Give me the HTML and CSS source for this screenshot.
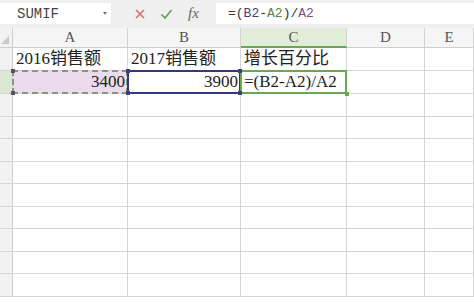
FILE: index.html
```html
<!DOCTYPE html>
<html>
<head>
<meta charset="utf-8">
<link rel="stylesheet" href="styles.css">
</head>
<body>
<div class="app">
  <div class="toolbar">
    <div class="namebox"><span class="name">SUMIF</span><span class="caret"></span></div>
    <div class="tools">
      <svg class="ico" width="12" height="12" viewBox="0 0 12 12"><path d="M2 2 L10 10 M10 2 L2 10" stroke="#e06a6a" stroke-width="1.5" fill="none"/></svg>
      <svg class="ico" width="13" height="12" viewBox="0 0 13 12"><path d="M1.5 6.5 L5 10 L11.5 2" stroke="#5aa552" stroke-width="1.6" fill="none"/></svg>
      <span class="fx">fx</span>
    </div>
    <div class="formula">=(<span class="r1">B2</span>-<span class="r2">A2</span>)/<span class="r3">A2</span></div>
  </div>
  <div class="sheet">
    <div class="corner"><span class="tri"></span></div>
    <div class="ch">A</div><div class="ch">B</div><div class="ch act">C</div><div class="ch">D</div><div class="ch">E</div>

    <div class="rh"></div>
    <div class="c">2016销售额</div><div class="c">2017销售额</div><div class="c">增长百分比</div><div class="c"></div><div class="c"></div>

    <div class="rh act"></div>
    <div class="c num ref-a">3400<i class="h tl"></i><i class="h bl"></i></div>
    <div class="c num ref-b">3900<i class="h tl"></i><i class="h bl"></i><i class="h tr"></i><i class="h br"></i></div>
    <div class="c cur">=(B2-A2)/A2<i class="fill"></i></div>
    <div class="c"></div><div class="c"></div>

    <div class="rh"></div><div class="c"></div><div class="c"></div><div class="c"></div><div class="c"></div><div class="c"></div>
    <div class="rh"></div><div class="c"></div><div class="c"></div><div class="c"></div><div class="c"></div><div class="c"></div>
    <div class="rh"></div><div class="c"></div><div class="c"></div><div class="c"></div><div class="c"></div><div class="c"></div>
    <div class="rh"></div><div class="c"></div><div class="c"></div><div class="c"></div><div class="c"></div><div class="c"></div>
    <div class="rh"></div><div class="c"></div><div class="c"></div><div class="c"></div><div class="c"></div><div class="c"></div>
    <div class="rh"></div><div class="c"></div><div class="c"></div><div class="c"></div><div class="c"></div><div class="c"></div>
    <div class="rh"></div><div class="c"></div><div class="c"></div><div class="c"></div><div class="c"></div><div class="c"></div>
    <div class="rh"></div><div class="c"></div><div class="c"></div><div class="c"></div><div class="c"></div><div class="c"></div>
    <div class="rh"></div><div class="c"></div><div class="c"></div><div class="c"></div><div class="c"></div><div class="c"></div>
  </div>
</div>
</body>
</html>
```

FILE: styles.css
```css
* { box-sizing: border-box; }
html, body { margin: 0; padding: 0; }
body { width: 474px; height: 302px; overflow: hidden; background: #fff; }
.app { display: flex; flex-direction: column; height: 302px; }

.toolbar {
  height: 28px;
  flex: none;
  display: flex;
  align-items: flex-start;
  padding-top: 3px;
  background: #efefef;
  font-family: "Liberation Mono", monospace;
  font-size: 13px;
  color: #333;
}
.namebox {
  width: 111px;
  height: 21px;
  background: #fff;
  display: flex;
  align-items: center;
  justify-content: space-between;
  padding: 0 4px 0 17px;
}
.name { font-size: 14px; color: #444; }
.caret {
  width: 0; height: 0;
  border-left: 2px solid transparent;
  border-right: 2px solid transparent;
  border-top: 3px solid #777;
}
.tools {
  width: 105px;
  height: 21px;
  display: flex;
  align-items: center;
  padding-left: 23px;
  gap: 14px;
}
.fx {
  font-family: "Liberation Serif", serif;
  font-style: italic;
  font-size: 15px;
  color: #666;
  margin-left: 1px;
}
.formula {
  flex: 1;
  height: 21px;
  background: #fff;
  display: flex;
  align-items: center;
  padding-left: 12px;
  color: #333;
}
.r1 { color: #3d3f86; }
.r2 { color: #5e7f46; }
.r3 { color: #7d4f86; }

.sheet {
  flex: 1;
  display: grid;
  grid-template-columns: 13px 115px 113px 106px 78px 1fr;
  grid-template-rows: 20px 23px 23px repeat(10, 22.5px);
  overflow: hidden;
  font-family: "Liberation Serif", "Noto Sans CJK SC", serif;
  font-size: 17px;
  color: #222;
}
.corner {
  position: relative;
  background: #f2f2f2;
  border-right: 1px solid #cfcfcf;
  border-bottom: 1px solid #cfcfcf;
}
.tri {
  position: absolute;
  right: 3px;
  bottom: 3px;
  width: 0; height: 0;
  border-left: 8px solid transparent;
  border-bottom: 8px solid #c9c9c9;
}
.ch {
  background: #f5f5f5;
  border-right: 1px solid #d3d3d3;
  border-bottom: 1px solid #cfcfcf;
  display: flex;
  align-items: center;
  justify-content: center;
  font-size: 15px;
  color: #555;
}
.ch.act {
  background: #e1edd9;
  border-bottom: 2px solid #6aa84f;
}
.rh {
  background: #f2f2f2;
  border-right: 1px solid #cfcfcf;
  border-bottom: 1px solid #d6d6d6;
}
.rh.act { background: #dbe8d3; }
.c {
  position: relative;
  border-right: 1px solid #d6d6d6;
  border-bottom: 1px solid #d6d6d6;
  display: flex;
  align-items: flex-end;
  padding: 0 3px 1px 3px;
  white-space: nowrap;
}
.c.num { justify-content: flex-end; padding-right: 2px; }
.ref-a { background: #eadcec; }
.ref-a::after {
  content: "";
  position: absolute;
  left: -1px; top: -1px; right: -1px; bottom: -1px;
  border: 2px dashed #8a9580;
}
.ref-b::after {
  content: "";
  position: absolute;
  left: -1px; top: -1px; right: -1px; bottom: -1px;
  border: 2px solid #34397f;
}
.cur::after {
  content: "";
  position: absolute;
  left: -1px; top: -1px; right: -1px; bottom: -1px;
  border: 2px solid #6aa84f;
}
.h {
  position: absolute;
  width: 4px; height: 4px;
  background: #3b3e78;
  z-index: 2;
}
.ref-a .h { background: #555; }
.h.tl { left: -2px; top: -2px; }
.h.bl { left: -2px; bottom: -2px; }
.h.tr { right: -2px; top: -2px; }
.h.br { right: -2px; bottom: -2px; }
.fill {
  position: absolute;
  right: -3px; bottom: -3px;
  width: 4px; height: 4px;
  background: #6aa84f;
  z-index: 2;
}
```
